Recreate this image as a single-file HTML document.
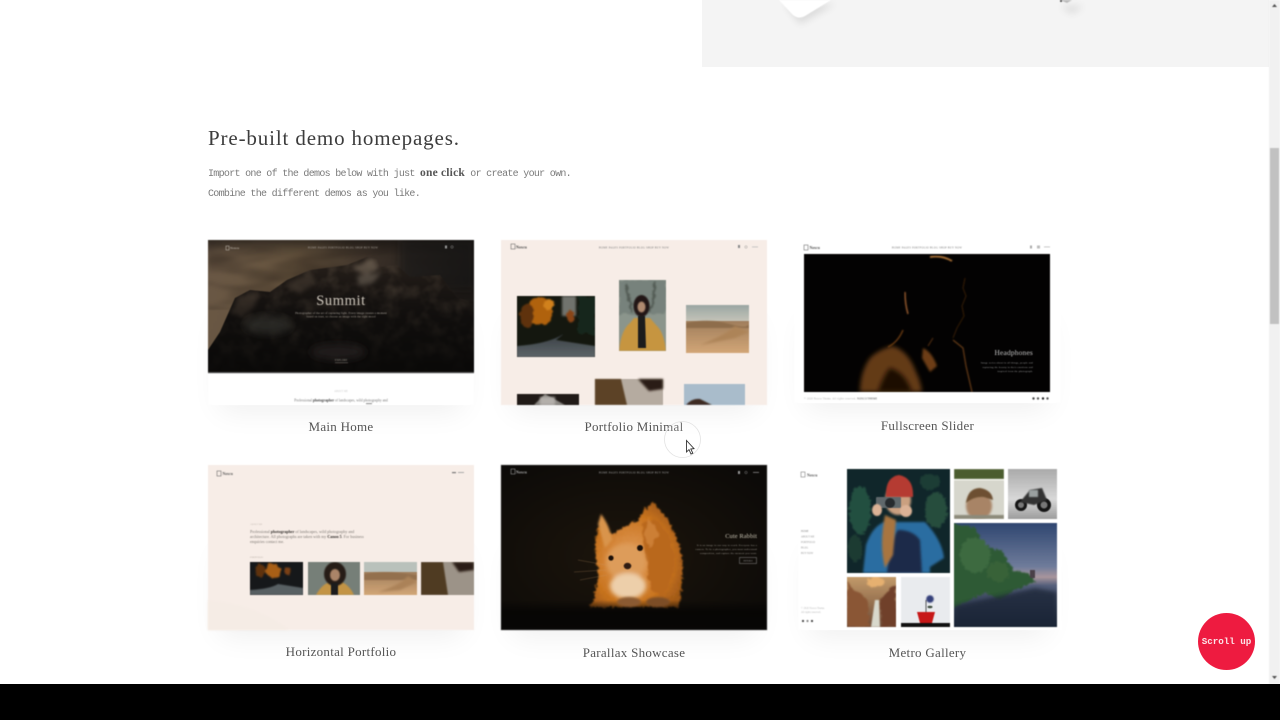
<!DOCTYPE html>
<html lang="en">
<head>
<meta charset="utf-8">
<title>Pre-built demo homepages</title>
<style>
html,body{margin:0;padding:0;width:1280px;height:720px;overflow:hidden;background:#fff}
.a{position:absolute}
#page{position:relative;width:1280px;height:720px;overflow:hidden;background:#fff}
h2{position:absolute;left:208px;top:125px;margin:0;font:400 21px/26px "Liberation Serif",serif;letter-spacing:.86px;color:#3c3c3c;white-space:nowrap;filter:blur(.25px)}
.p{position:absolute;left:208px;font:10px/14px "Liberation Mono",monospace;letter-spacing:-.7px;color:#7a7a7a;white-space:nowrap;filter:blur(.2px)}
.p b{font:700 11.5px/14px "Liberation Serif",serif;letter-spacing:.2px;color:#555}
.l{position:absolute;width:293px;text-align:center;font:400 13px/16px "Liberation Serif",serif;letter-spacing:.28px;color:#555;white-space:nowrap;filter:blur(.2px)}
.s{position:absolute;background:#fff;box-shadow:0 14px 30px -8px rgba(0,0,0,.065)}
svg text{font-family:"Liberation Serif",serif}
#up{position:absolute;left:1198px;top:613px;width:57px;height:57px;border-radius:50%;background:#ee1b40;color:#fbe4e8;font:700 9.2px/58px "Liberation Mono",monospace;text-align:center;white-space:nowrap}
</style>
</head>
<body>
<div id="page">
<div class="a" style="left:702px;top:0;width:567px;height:67px;background:#f4f4f4"></div>
<div class="s" style="left:212px;top:300px;width:258px;height:105px"></div>
<div class="s" style="left:505px;top:300px;width:258px;height:105px"></div>
<div class="s" style="left:798px;top:300px;width:258px;height:103px"></div>
<div class="s" style="left:212px;top:530px;width:258px;height:100px"></div>
<div class="s" style="left:505px;top:530px;width:258px;height:100px"></div>
<div class="s" style="left:802px;top:530px;width:252px;height:100px"></div>

<svg class="a" style="left:0;top:0;filter:blur(.4px)" width="1280" height="720" viewBox="0 0 1280 720">
<defs>
<filter id="b05" x="-20%" y="-20%" width="140%" height="140%"><feGaussianBlur stdDeviation=".5"/></filter>
<filter id="b1" x="-30%" y="-30%" width="160%" height="160%"><feGaussianBlur stdDeviation="1"/></filter>
<filter id="b2" x="-40%" y="-40%" width="180%" height="180%"><feGaussianBlur stdDeviation="2"/></filter>
<filter id="b4" x="-50%" y="-50%" width="200%" height="200%"><feGaussianBlur stdDeviation="4"/></filter>
<filter id="r" x="-15%" y="-15%" width="130%" height="130%"><feTurbulence type="fractalNoise" baseFrequency=".16" numOctaves="2" seed="3" result="n"/><feDisplacementMap in="SourceGraphic" in2="n" scale="6" xChannelSelector="R" yChannelSelector="G"/><feGaussianBlur stdDeviation=".9"/></filter>
<filter id="rf" x="-15%" y="-15%" width="130%" height="130%"><feTurbulence type="fractalNoise" baseFrequency=".3" numOctaves="2" seed="9" result="n"/><feDisplacementMap in="SourceGraphic" in2="n" scale="6" xChannelSelector="R" yChannelSelector="G"/><feGaussianBlur stdDeviation=".8"/></filter>
<filter id="g" x="0" y="0" width="100%" height="100%" color-interpolation-filters="sRGB"><feTurbulence type="fractalNoise" baseFrequency=".07" numOctaves="3" seed="7"/><feColorMatrix values="0 0 0 0 .5 0 0 0 0 .43 0 0 0 0 .36 1.7 0 0 0 -.72"/><feGaussianBlur stdDeviation=".8"/></filter>
<filter id="cl" x="0" y="0" width="100%" height="100%" color-interpolation-filters="sRGB"><feTurbulence type="fractalNoise" baseFrequency=".012 .05" numOctaves="3" seed="4"/><feColorMatrix values="0 0 0 0 .12 0 0 0 0 .09 0 0 0 0 .07 2 0 0 0 -.8"/><feGaussianBlur stdDeviation="1.5"/></filter>
<clipPath id="c1"><rect x="208" y="240" width="266" height="133"/></clipPath>
<clipPath id="mt"><path d="M208 350 L220 332 L235 298 L250 290 L270 292 L287 280 L310 270 L333 267 L347 265 L367 257 L377 258 L380 267 L397 265 L410 277 L440 275 L457 298 L474 302 L474 373 L208 373Z"/></clipPath>
<clipPath id="c3"><rect x="804" y="254" width="246" height="138"/></clipPath>
<clipPath id="c5"><rect x="501" y="465" width="266" height="165"/></clipPath>
<clipPath id="ca"><rect x="517" y="296" width="78" height="61"/></clipPath>
<clipPath id="cb"><rect x="619" y="280" width="47" height="71"/></clipPath>
<clipPath id="cc"><rect x="686" y="305" width="63" height="48"/></clipPath>
<clipPath id="cd"><rect x="501" y="240" width="266" height="165"/></clipPath>
<clipPath id="ce"><rect x="250" y="562" width="53" height="33"/></clipPath>
<clipPath id="cf"><rect x="308" y="562" width="52" height="33"/></clipPath>
<clipPath id="cg"><rect x="364" y="562" width="53" height="33"/></clipPath>
<clipPath id="ch"><rect x="421" y="562" width="53" height="33"/></clipPath>
<clipPath id="ci"><rect x="847" y="469" width="103" height="104"/></clipPath>
<clipPath id="cj"><rect x="954" y="469" width="50" height="50"/></clipPath>
<clipPath id="ck"><rect x="1008" y="469" width="49" height="50"/></clipPath>
<clipPath id="cl2"><rect x="954" y="523" width="103" height="104"/></clipPath>
<clipPath id="cm"><rect x="847" y="577" width="49" height="50"/></clipPath>
<clipPath id="cn"><rect x="901" y="577" width="49" height="50"/></clipPath>
<linearGradient id="sky" x1="0" y1="0" x2="1" y2=".2">
<stop offset="0" stop-color="#6a5846"/><stop offset=".35" stop-color="#67553f"/><stop offset=".62" stop-color="#3a3028"/><stop offset="1" stop-color="#1b1816"/></linearGradient>
<linearGradient id="rock" x1="0" y1="0" x2="0" y2="1"><stop offset="0" stop-color="#2b231d"/><stop offset=".5" stop-color="#181412"/><stop offset="1" stop-color="#0c0b0a"/></linearGradient>
<linearGradient id="fade" x1="0" y1="0" x2="0" y2="1"><stop offset="0" stop-color="#0c0b0a" stop-opacity="0"/><stop offset=".55" stop-color="#0c0b0a" stop-opacity=".6"/><stop offset="1" stop-color="#0a0908" stop-opacity=".95"/></linearGradient>
<linearGradient id="topd" x1="0" y1="0" x2="0" y2="1"><stop offset="0" stop-color="#14110f" stop-opacity=".6"/><stop offset="1" stop-color="#14110f" stop-opacity="0"/></linearGradient>
<linearGradient id="road" x1="0" y1="0" x2="0" y2="1"><stop offset="0" stop-color="#3a4145"/><stop offset="1" stop-color="#5d6468"/></linearGradient>
<linearGradient id="sand" x1="0" y1="0" x2="0" y2="1"><stop offset="0" stop-color="#a07e5c"/><stop offset="1" stop-color="#d2a677"/></linearGradient>
<linearGradient id="dsky" x1="0" y1="0" x2="0" y2="1"><stop offset="0" stop-color="#9aa6a3"/><stop offset="1" stop-color="#c9c7bb"/></linearGradient>
<linearGradient id="lake" x1="0" y1="0" x2="0" y2="1"><stop offset="0" stop-color="#2f4670"/><stop offset=".42" stop-color="#6f7c9b"/><stop offset=".52" stop-color="#a9959c"/><stop offset=".6" stop-color="#56607c"/><stop offset="1" stop-color="#141f30"/></linearGradient>
<linearGradient id="cany" x1="0" y1="0" x2="0" y2="1"><stop offset="0" stop-color="#c29a6a"/><stop offset="1" stop-color="#6d4a36"/></linearGradient>
<linearGradient id="moto" x1="0" y1="0" x2="0" y2="1"><stop offset="0" stop-color="#aaaaaa"/><stop offset=".6" stop-color="#d8d8d8"/><stop offset="1" stop-color="#9c9c9c"/></linearGradient>
<linearGradient id="flr" x1="0" y1="0" x2="0" y2="1"><stop offset="0" stop-color="#060504" stop-opacity="0"/><stop offset=".4" stop-color="#060504" stop-opacity=".9"/><stop offset="1" stop-color="#080706"/></linearGradient>
<radialGradient id="fur" cx=".45" cy=".55" r=".6"><stop offset="0" stop-color="#e4a060"/><stop offset=".7" stop-color="#c9741f"/><stop offset="1" stop-color="#a25a18"/></radialGradient>
<radialGradient id="bgs" cx=".45" cy=".55" r=".7"><stop offset="0" stop-color="#1c150c"/><stop offset="1" stop-color="#0c0a08"/></radialGradient>
</defs>

<!-- white shape top -->
<g filter="url(#b4)" opacity=".1"><path d="M785 4 L800 24 L835 4Z" fill="#000"/><path d="M1060 6 h24 l-12 8z" fill="#000"/></g>
<path d="M779 0 L792 14 Q798 20 805 16 L831 0Z" fill="#fff"/>
<path d="M1060 0 L1072 0 L1067 3Z" fill="#bbb"/><circle cx="1061" cy="1" r="1" fill="#333"/>

<!-- CARD 1 -->
<rect x="208" y="240" width="266" height="165" fill="#fff"/>
<g clip-path="url(#c1)">
<rect x="208" y="240" width="266" height="133" fill="url(#sky)"/>
<rect x="208" y="240" width="266" height="70" filter="url(#cl)" opacity=".7"/>
<rect x="208" y="240" width="266" height="16" fill="url(#topd)"/>
<rect x="400" y="240" width="74" height="50" fill="#181513" opacity=".55" filter="url(#b4)"/>
<g clip-path="url(#mt)">
<rect x="208" y="255" width="266" height="118" fill="url(#rock)"/>
<rect x="208" y="255" width="266" height="118" filter="url(#g)" opacity=".55"/>
<g filter="url(#b2)">
<path d="M352 268 l20-9 7 9 -13 8z" fill="#6f6354" opacity=".8"/><path d="M357 276 l24-3 -8 10 -14 3z" fill="#7c7163" opacity=".7"/><path d="M238 296 l22-3 -6 14 -12 10 -10-4z" fill="#5c4c3e" opacity=".7"/><path d="M285 284 l24-10 8 8 -18 12z" fill="#4e4136" opacity=".7"/>
</g>
<rect x="208" y="255" width="266" height="118" fill="url(#fade)"/>
<g filter="url(#b4)"><ellipse cx="268" cy="325" rx="24" ry="9" fill="#3c3936" opacity=".55"/><ellipse cx="338" cy="352" rx="28" ry="8" fill="#2e2b29" opacity=".55"/></g>
</g>
</g>
<rect x="208" y="372" width="266" height="1.2" fill="#555"/>
<rect x="226" y="246" width="3" height="4" fill="none" stroke="#c9c2b7" stroke-width=".5"/><text x="230" y="249" font-size="3.4" fill="#c9c2b7">Noxcu</text>
<text x="343" y="248.5" font-size="2.6" fill="#a9a29a" text-anchor="middle" letter-spacing=".3">HOME PAGES PORTFOLIO BLOG SHOP BUY NOW</text>
<text x="341" y="305" font-size="14.5" fill="#cfc8bd" text-anchor="middle" letter-spacing=".6">Summit</text>
<text x="341" y="314" font-size="2.9" fill="#a9a29a" text-anchor="middle" letter-spacing=".1">Photographer of the art of capturing light. Every image creates a moment</text>
<text x="341" y="317.5" font-size="2.9" fill="#a29a90" text-anchor="middle" letter-spacing=".1">based on trust, so choose an image with the right mood</text>
<text x="341" y="361" font-size="2.8" fill="#8f8a82" text-anchor="middle">EXPLORE</text>
<rect x="335" y="362.5" width="13" height=".5" fill="#77726c"/>
<circle cx="452" cy="247" r="1.2" fill="none" stroke="#aaa" stroke-width=".4"/><rect x="445" y="245.5" width="2" height="3" fill="#999"/>
<text x="341" y="392" font-size="2.6" fill="#ccc" text-anchor="middle">ABOUT ME</text>
<text x="341" y="401.5" font-size="3.6" fill="#777" text-anchor="middle">Professional <tspan font-weight="700" fill="#444">photographer</tspan> of landscapes, wild photography and</text>
<rect x="366" y="403" width="6" height="1.2" fill="#999"/>

<!-- CARD 2 -->
<rect x="501" y="240" width="266" height="165" fill="#f7ede7"/>
<rect x="511" y="244" width="4" height="5" fill="none" stroke="#555" stroke-width=".5"/><text x="516" y="248.5" font-size="4" font-weight="700" fill="#4a4a4a">Noxcu</text>
<text x="634" y="248.5" font-size="2.6" fill="#777" text-anchor="middle" letter-spacing=".3">HOME PAGES PORTFOLIO BLOG SHOP BUY NOW</text>
<rect x="738" y="245" width="2" height="3" fill="#888"/><circle cx="746" cy="247" r="1.2" fill="none" stroke="#888" stroke-width=".4"/><rect x="752" y="246.5" width="6" height=".8" fill="#bbb"/>
<g clip-path="url(#ca)"><rect x="517" y="296" width="78" height="61" fill="#14170f"/>
<rect x="562" y="296" width="14" height="20" fill="#71736d" filter="url(#b1)"/>
<g filter="url(#r)"><ellipse cx="540" cy="311" rx="13" ry="14" fill="#b0620f"/><ellipse cx="527" cy="316" rx="7" ry="13" fill="#5e330d"/><ellipse cx="549" cy="304" rx="6" ry="5" fill="#d1811c"/><ellipse cx="571" cy="316" rx="4" ry="6" fill="#8a4412"/><rect x="578" y="296" width="17" height="38" fill="#18251f"/></g>
<path d="M517 357 L517 346 Q545 344 560 336 Q568 331 556 340 L595 346 V357Z" fill="url(#road)" filter="url(#b05)"/></g>
<g clip-path="url(#cb)"><rect x="619" y="280" width="47" height="71" fill="#8b958c"/>
<g filter="url(#r)"><rect x="619" y="280" width="47" height="34" fill="#77827c"/><path d="M626 284 L632 312 M656 282 L650 312" stroke="#525b55" stroke-width="2.5" fill="none"/></g>
<path d="M619 351 Q621 330 630 323 L634 318 L650 318 L656 325 Q664 332 666 351Z" fill="#c69540" filter="url(#b05)"/>
<ellipse cx="641.5" cy="306" rx="8" ry="11" fill="#201815" filter="url(#b05)"/><ellipse cx="641.5" cy="307" rx="4" ry="5.5" fill="#b08a70" filter="url(#b05)"/>
<path d="M638 316 h7 l1 32 h-8z" fill="#1c1c1c"/></g>
<g clip-path="url(#cc)"><rect x="686" y="305" width="63" height="18" fill="url(#dsky)"/><rect x="686" y="321" width="63" height="32" fill="url(#sand)"/>
<path d="M686 323 Q710 318 730 324 T749 322 V328 H686Z" fill="#8e6d4c" filter="url(#b05)"/><path d="M700 345 Q725 335 735 326 L749 332 L735 338Z" fill="#ad8459" filter="url(#b1)"/></g>
<g clip-path="url(#cd)">
<rect x="517" y="394" width="62" height="11" fill="#201a17"/><path d="M534 405 L545 394 L565 405Z" fill="#8d8a85" filter="url(#b05)"/><rect x="540" y="397" width="15" height="8" fill="#b3afaa" filter="url(#b1)"/>
<rect x="595" y="379" width="68" height="26" fill="#b5aba0"/><path d="M595 379 h26 l6 26 h-32z" fill="#5c4326" filter="url(#b05)"/><path d="M638 379 h25 v10 l-14 2z" fill="#2a1d16" filter="url(#b1)"/>
<rect x="684" y="384" width="61" height="21" fill="#a9bccb"/><path d="M686 405 q6-7 14-6 l12 6z" fill="#3d2a22" filter="url(#b05)"/>
</g>

<!-- CARD 3 -->
<rect x="794" y="240" width="267" height="163" fill="#fff"/>
<rect x="804" y="254" width="246" height="138" fill="#030202"/>
<g clip-path="url(#c3)">
<path d="M860 392 Q860 372 870 358 Q878 350 892 346 Q908 350 916 372 Q921 382 922 392Z" fill="#643a14" filter="url(#b2)"/>
<path d="M878 392 Q884 374 890 368 Q905 372 912 392Z" fill="#1e1006" filter="url(#b2)"/>
<path d="M930 257 Q942 255 952 261" fill="none" stroke="#b87a3a" stroke-width="1.8" filter="url(#b05)"/>
<path d="M905 292 Q905 304 908 314" fill="none" stroke="#a06030" stroke-width="1.4" filter="url(#b05)"/>
<path d="M903 330 Q898 342 888 347" fill="none" stroke="#7a4519" stroke-width="1.2" filter="url(#b05)"/>
<path d="M965 278 L963 288 L966 296 L962 306 L964 316 L957 328 L953 338" fill="none" stroke="#4f2c0f" stroke-width=".7" filter="url(#b05)"/>
<path d="M953 340 L963 348 L966 366 L972 392" fill="none" stroke="#8a5120" stroke-width=".9" filter="url(#b05)"/>
<path d="M923 348 Q932 352 937 366 L930 372 L922 358Z" fill="#6d3e17" filter="url(#b1)"/>
<path d="M933 338 L928 346" stroke="#6a3c16" stroke-width=".8" filter="url(#b05)"/>
</g>
<text x="1033" y="355" font-size="7.4" fill="#c9c9c9" text-anchor="end" letter-spacing=".2">Headphones</text>
<text x="1033" y="363.5" font-size="2.5" fill="#a9a9a9" text-anchor="end" letter-spacing=".2">Image series about in all things, people and</text>
<text x="1033" y="368" font-size="2.5" fill="#a9a9a9" text-anchor="end" letter-spacing=".2">capturing the beauty in their emotions and</text>
<text x="1033" y="372" font-size="2.5" fill="#a9a9a9" text-anchor="end" letter-spacing=".2">inspired from the photograph.</text>
<rect x="804" y="245" width="4" height="5" fill="none" stroke="#555" stroke-width=".5"/><text x="809.5" y="249" font-size="3.8" font-weight="700" fill="#4a4a4a">Noxcu</text>
<text x="927" y="248.5" font-size="2.6" fill="#777" text-anchor="middle" letter-spacing=".3">HOME PAGES PORTFOLIO BLOG SHOP BUY NOW</text>
<rect x="1030" y="245.5" width="2" height="3" fill="#aaa"/><rect x="1037" y="245.5" width="3" height="3" fill="#bbb"/><rect x="1044" y="246.5" width="6" height=".8" fill="#bbb"/>
<text x="804" y="399.5" font-size="2.6" fill="#aaa" letter-spacing=".2">© 2020 Noxcu Theme. All rights reserved. <tspan fill="#444">NOXCUTHEME</tspan></text>
<circle cx="1033.5" cy="398.5" r="1.2" fill="#444"/><circle cx="1038" cy="398.5" r="1.2" fill="#555"/><circle cx="1043" cy="398.5" r="1.2" fill="#222"/><circle cx="1047.5" cy="398.5" r="1.2" fill="#555"/>

<!-- CARD 4 -->
<rect x="208" y="465" width="266" height="165" fill="#f7ede7"/>
<path d="M208 600 Q255 604 290 630 H208Z" fill="#f5ece5" filter="url(#b1)"/>
<rect x="217" y="471" width="4" height="5" fill="none" stroke="#555" stroke-width=".5"/><text x="222.5" y="475" font-size="3.8" font-weight="700" fill="#555">Noxcu</text>
<rect x="452" y="472" width="4" height="1.2" fill="#777"/><rect x="458" y="472" width="6" height="1" fill="#aaa"/>
<text x="250" y="525" font-size="2.4" fill="#c3bab2">ABOUT ME</text>
<text x="250" y="533" font-size="4" fill="#7d7873">Professional <tspan font-weight="700" fill="#2f2c29">photographer</tspan> of landscapes, wild photography and</text>
<text x="250" y="538" font-size="4" fill="#7d7873">architecture. All photographs are taken with my <tspan font-weight="700" fill="#2f2c29">Canon 5</tspan>. For business</text>
<text x="250" y="543" font-size="4" fill="#7d7873">enquiries contact me.</text>
<text x="250" y="558" font-size="2.4" fill="#b3aaa2">PORTFOLIO</text>
<g clip-path="url(#ce)"><rect x="250" y="562" width="53" height="33" fill="#16181a"/><g filter="url(#r)"><ellipse cx="273" cy="570" rx="8" ry="7" fill="#a85f16"/><ellipse cx="260" cy="571" rx="5" ry="6" fill="#5e330d"/><ellipse cx="288" cy="571" rx="3" ry="4" fill="#7a4012"/></g><path d="M250 595 v-5 q20-1 28-6 l25 4 v7z" fill="#596064" filter="url(#b05)"/></g>
<g clip-path="url(#cf)"><rect x="308" y="562" width="52" height="33" fill="#767f78"/><path d="M316 595 Q322 584 330 582 L342 582 Q350 586 354 595Z" fill="#c39445" filter="url(#b05)"/><ellipse cx="335" cy="574" rx="11" ry="12" fill="#261c18" filter="url(#b05)"/><ellipse cx="335" cy="575" rx="5" ry="6" fill="#aa8468" filter="url(#b05)"/><rect x="331" y="583" width="7" height="12" fill="#1c1c1c"/></g>
<g clip-path="url(#cg)"><rect x="364" y="562" width="53" height="12" fill="#b9c1bb"/><rect x="364" y="572" width="53" height="23" fill="url(#sand)"/><path d="M364 574 Q385 570 417 575 V580 H364Z" fill="#936f4e" filter="url(#b05)"/><path d="M378 592 Q400 585 408 576 L417 582 L400 590Z" fill="#ab8258" filter="url(#b1)"/></g>
<g clip-path="url(#ch)"><rect x="421" y="562" width="53" height="33" fill="#9c9388"/><path d="M421 562 h22 l5 33 h-27z" fill="#4f3a22" filter="url(#b05)"/><path d="M452 562 h22 v8 l-15 2z" fill="#2a1d16" filter="url(#b1)"/></g>

<!-- CARD 5 -->
<rect x="501" y="465" width="266" height="165" fill="url(#bgs)"/>
<g clip-path="url(#c5)">
<g filter="url(#rf)">
<path d="M590 607 Q598 590 598 570 Q592 540 599 526 L612 535 Q625 526 638 520 Q648 505 653 502 L660 510 Q676 530 682 556 Q684 585 678 607Z" fill="url(#fur)"/>
</g>
<g filter="url(#r)">
<path d="M642 524 Q654 514 660 524 Q674 538 675 560 Q671 585 664 598 L652 590 Q644 560 642 524Z" fill="#b9681f"/>
<path d="M648 518 Q656 522 659 536 L650 548 L645 535Z" fill="#cc7f36"/>
</g>
<path d="M598 524 L601 514 Q610 526 612 540 L605 548Z" fill="#d9944c" filter="url(#b1)"/>
<g filter="url(#b2)"><ellipse cx="626" cy="562" rx="20" ry="18" fill="#dd9c5a"/><ellipse cx="628" cy="586" rx="18" ry="13" fill="#edcfaa"/></g>
<g fill="none" stroke="#c99a6a" stroke-width=".35" opacity=".6"><path d="M606 565 L578 560 M606 570 L574 572 M607 575 L580 580"/></g>
<circle cx="640" cy="548" r="3" fill="#1a0f08"/><circle cx="611" cy="558" r="2.6" fill="#1a0f08"/><ellipse cx="627.5" cy="566" rx="3.8" ry="3.2" fill="#2f1c12"/>
<rect x="501" y="600" width="266" height="30" fill="url(#flr)"/>
<g filter="url(#b1)"><ellipse cx="629" cy="602" rx="12" ry="5" fill="#8a5a32"/><ellipse cx="658" cy="602" rx="12" ry="5" fill="#7c4e28"/></g>
</g>
<rect x="501" y="465" width="266" height="165" fill="none" stroke="#777" stroke-width=".4"/>
<rect x="511" y="469" width="4" height="5" fill="none" stroke="#aaa" stroke-width=".5"/><text x="516" y="473.5" font-size="4" font-weight="700" fill="#aaa">Noxcu</text>
<text x="634" y="473.5" font-size="2.6" fill="#a5a5a5" text-anchor="middle" letter-spacing=".3">HOME PAGES PORTFOLIO BLOG SHOP BUY NOW</text>
<rect x="738" y="471" width="2" height="3" fill="#999"/><circle cx="746" cy="472.5" r="1.2" fill="none" stroke="#999" stroke-width=".4"/><rect x="753" y="472" width="6" height=".8" fill="#888"/>
<text x="757" y="538" font-size="6.4" fill="#c9c3b3" text-anchor="end" letter-spacing=".1">Cute Rabbit</text>
<text x="757" y="546" font-size="2.5" fill="#a8a49c" text-anchor="end" letter-spacing=".2">It is an image in our way to reach. Everyone has a</text>
<text x="757" y="550" font-size="2.5" fill="#a8a49c" text-anchor="end" letter-spacing=".2">camera. To be a photographer, you must understand</text>
<text x="757" y="554" font-size="2.5" fill="#a8a49c" text-anchor="end" letter-spacing=".2">composition, and capture the moment you want.</text>
<rect x="739.5" y="557.5" width="17" height="6" fill="none" stroke="#aaa" stroke-width=".4"/><text x="748" y="561.5" font-size="2.2" fill="#aaa" text-anchor="middle">DETAILS</text>

<!-- CARD 6 -->
<rect x="798" y="465" width="264" height="165" fill="#fff"/>
<rect x="801" y="472" width="4" height="5" fill="none" stroke="#666" stroke-width=".5"/><text x="807" y="476.5" font-size="3.8" font-weight="700" fill="#555">Noxcu</text>
<text x="801" y="532" font-size="2.6" fill="#888">HOME</text><text x="801" y="537.5" font-size="2.6" fill="#999">ABOUT ME</text><text x="801" y="543" font-size="2.6" fill="#999">PORTFOLIO</text><text x="801" y="548.5" font-size="2.6" fill="#999">BLOG</text><text x="801" y="554" font-size="2.6" fill="#999">BUY NOW</text>
<text x="801" y="609" font-size="2.6" fill="#bbb">© 2020 Noxcu Theme.</text><text x="801" y="613" font-size="2.6" fill="#bbb">All rights reserved.</text>
<circle cx="803" cy="621" r="1.1" fill="#444"/><circle cx="807.5" cy="621" r="1.1" fill="#888"/><circle cx="812" cy="621" r="1.1" fill="#444"/>
<g clip-path="url(#ci)"><rect x="847" y="469" width="103" height="104" fill="#10262a"/>
<g filter="url(#rf)"><ellipse cx="860" cy="510" rx="11" ry="24" fill="#24503f"/><ellipse cx="936" cy="510" rx="11" ry="18" fill="#274e3d"/><ellipse cx="855" cy="548" rx="7" ry="14" fill="#1b3a33"/><ellipse cx="930" cy="482" rx="10" ry="8" fill="#1c3d36"/></g>
<path d="M863 573 L866 545 Q872 527 884 522 L925 522 Q942 540 944 558 L930 567 L930 573Z" fill="#2b6da1" filter="url(#b1)"/>
<path d="M887 573 Q890 540 898 530 Q913 530 920 540 L922 573Z" fill="#1c2b48" filter="url(#b1)"/>
<path d="M885 515 Q879 545 885 568 L893 555 L896 520Z" fill="#a87440" filter="url(#b1)"/>
<ellipse cx="898" cy="500" rx="13" ry="15" fill="#caa080" filter="url(#b1)"/>
<path d="M886 497 Q885 477 899 475 Q914 478 913 497Z" fill="#b53a30" filter="url(#b05)"/>
<rect x="876" y="497" width="25" height="11" rx="1" fill="#5f686b"/><circle cx="890" cy="503" r="5" fill="#262b2e"/>
<ellipse cx="877" cy="510" rx="5" ry="6" fill="#dbb296" filter="url(#b05)"/><ellipse cx="906" cy="511" rx="6" ry="6" fill="#dbb296" filter="url(#b05)"/>
</g>
<g clip-path="url(#cj)"><rect x="954" y="469" width="50" height="50" fill="#d6d6cc"/><rect x="954" y="469" width="50" height="10" fill="#4b5b2e" filter="url(#b05)"/><rect x="954" y="479" width="50" height="1.5" fill="#f0f0e8"/>
<ellipse cx="979" cy="506" rx="13" ry="14" fill="#a88466" filter="url(#b1)"/><path d="M966 503 Q968 488 980 488 Q992 490 993 500 L984 497 Q974 496 966 503Z" fill="#6d5030" filter="url(#b05)"/><rect x="954" y="515" width="50" height="4" fill="#8c8a7a" filter="url(#b05)"/></g>
<g clip-path="url(#ck)"><rect x="1008" y="469" width="49" height="50" fill="url(#moto)"/><circle cx="1021" cy="505" r="6" fill="#151515"/><circle cx="1044" cy="505" r="7" fill="#151515"/><circle cx="1021" cy="505" r="3" fill="#777"/><circle cx="1044" cy="505" r="3.5" fill="#777"/><path d="M1020 502 L1030 490 L1042 488 L1047 500 L1034 505Z" fill="#333" filter="url(#b05)"/><rect x="1029" y="490" width="9" height="7" fill="#9aa0a0" filter="url(#b05)"/></g>
<g clip-path="url(#cl2)"><rect x="954" y="523" width="103" height="104" fill="url(#lake)"/>
<g filter="url(#rf)"><path d="M950 523 L975 527 L985 545 L1003 552 L1013 570 L1030 574 L1035 582 L1015 590 L1000 600 L985 592 L970 600 L950 610Z" fill="#2f5a36"/><ellipse cx="975" cy="555" rx="15" ry="18" fill="#3c6a40"/><ellipse cx="998" cy="572" rx="11" ry="10" fill="#376238"/></g>
<rect x="1030" y="570" width="5" height="8" fill="#4a4048"/><path d="M954 606 L1035 588 L1057 592 V627 H954Z" fill="#1a2739" opacity=".8" filter="url(#b2)"/></g>
<g clip-path="url(#cm)"><rect x="847" y="577" width="49" height="50" fill="url(#cany)"/><g filter="url(#r)"><path d="M847 582 L867 600 L870 627 H847Z" fill="#8a5636"/><path d="M896 582 L880 600 L882 627 H896Z" fill="#70402c"/><ellipse cx="875" cy="582" rx="8" ry="5" fill="#e6b070"/></g><path d="M871 627 L875 600 L879 600 L880 627Z" fill="#d8d8cc" filter="url(#b05)"/></g>
<g clip-path="url(#cn)"><rect x="901" y="577" width="49" height="50" fill="#e9ebee"/><rect x="901" y="623" width="49" height="4" fill="#111"/><path d="M917 612 h18 l-3 11 h-12z" fill="#c71818"/><path d="M926 612 V600" stroke="#333" stroke-width=".8"/><circle cx="930" cy="599" r="3.8" fill="#36407a" filter="url(#b05)"/><ellipse cx="930" cy="607" rx="2.5" ry="1.2" fill="#3e4d3e"/></g>

<!-- scrollbar -->
<rect x="1269" y="0" width="11" height="684" fill="#f1f1f1"/>
<rect x="1270" y="148" width="9" height="176" fill="#c1c1c1"/>
<path d="M1272 7 l2.5-3 2.5 3z M1272 676 l5 0 -2.5 3z" fill="#505050"/>
</svg>
<div class="a" style="left:0;top:684px;width:1280px;height:36px;background:#000"></div>

<h2>Pre-built demo homepages.</h2>
<div class="p" style="top:166px">Import one of the demos below with just <b>one click</b> or create your own.</div>
<div class="p" style="top:188px">Combine the different demos as you like.</div>

<div class="l" style="left:194.5px;top:419px">Main Home</div>
<div class="l" style="left:487.5px;top:419px">Portfolio Minimal</div>
<div class="l" style="left:781px;top:418px">Fullscreen Slider</div>
<div class="l" style="left:194.5px;top:644px">Horizontal Portfolio</div>
<div class="l" style="left:487.5px;top:645px">Parallax Showcase</div>
<div class="l" style="left:781px;top:645px">Metro Gallery</div>

<svg class="a" style="left:660px;top:415px" width="60" height="60" viewBox="660 415 60 60">
<circle cx="682.5" cy="439.5" r="18" fill="rgba(255,255,255,.15)" stroke="#e2e2e2" stroke-width=".8"/>
<path d="M686.5 440.5 V452 L689 449.6 L691 454 L692.8 453.2 L690.8 449 L694 448.6Z" fill="#fff" stroke="#333" stroke-width=".9"/>
</svg>
<div id="up">Scroll up</div>
</div>
</body>
</html>
